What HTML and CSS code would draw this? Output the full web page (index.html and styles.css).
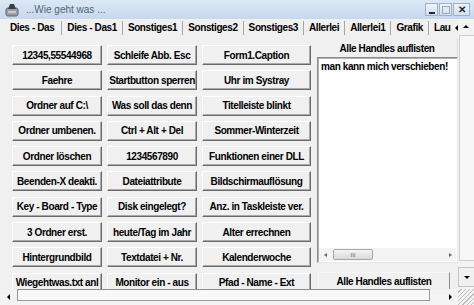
FILE: index.html
```html
<!DOCTYPE html>
<html lang="de">
  <head>
    <meta charset="UTF-8" />
    <title>...Wie geht was ...</title>
    <link rel="stylesheet" href="styles.css">
  </head>
  <body>
    <div class="window">
      <div class="titlebar">
        <svg class="app-icon" width="14" height="14" viewBox="0 0 14 14">
          <rect x="1" y="5" width="12" height="8" rx="2" fill="#9aa0a6" stroke="#5f6368" />
          <path d="M3 6 L5 1 L9 1 L11 6 Z" fill="#3c4043" />
          <rect x="3" y="8" width="8" height="2" fill="#c8ccd0" />
        </svg>
        <span class="title">...Wie geht was ...</span>
        <div class="caption-btns">
          <span class="cbtn"><i class="min"></i></span>
          <span class="cbtn"><i class="max"></i></span>
          <span class="cbtn close">&#x2715;</span>
        </div>
      </div>

      <div class="middle">
        <div class="viewport">
          <div class="tabs">
            <span class="tab active">Dies - Das</span>
            <span class="tab">Dies - Das1</span>
            <span class="tab">Sonstiges1</span>
            <span class="tab">Sonstiges2</span>
            <span class="tab">Sonstiges3</span>
            <span class="tab">Allerlei</span>
            <span class="tab">Allerlei1</span>
            <span class="tab">Grafik</span>
            <span class="tab last">Lau</span>
            <span class="tab-arrow"><i class="tri-left"></i></span>
          </div>

          <div class="page">
            <div class="grid">
              <button class="btn">12345,55544968</button>
              <button class="btn">Schleife Abb. Esc</button>
              <button class="btn">Form1.Caption</button>
              <button class="btn">Faehre</button>
              <button class="btn">Startbutton sperren</button>
              <button class="btn">Uhr im Systray</button>
              <button class="btn">Ordner auf C:\</button>
              <button class="btn">Was soll das denn</button>
              <button class="btn">Titelleiste blinkt</button>
              <button class="btn">Ordner umbenen.</button>
              <button class="btn">Ctrl + Alt + Del</button>
              <button class="btn">Sommer-Winterzeit</button>
              <button class="btn">Ordner löschen</button>
              <button class="btn">1234567890</button>
              <button class="btn">Funktionen einer DLL</button>
              <button class="btn">Beenden-X deakti.</button>
              <button class="btn">Dateiattribute</button>
              <button class="btn">Bildschirmauflösung</button>
              <button class="btn">Key - Board - Type</button>
              <button class="btn">Disk eingelegt?</button>
              <button class="btn">Anz. in Taskleiste ver.</button>
              <button class="btn">3 Ordner erst.</button>
              <button class="btn">heute/Tag im Jahr</button>
              <button class="btn">Alter errechnen</button>
              <button class="btn">Hintergrundbild</button>
              <button class="btn">Textdatei + Nr.</button>
              <button class="btn">Kalenderwoche</button>
              <button class="btn">Wiegehtwas.txt anl</button>
              <button class="btn">Monitor ein - aus</button>
              <button class="btn">Pfad - Name - Ext</button>
            </div>

            <div class="side">
              <div class="side-head">Alle Handles auflisten</div>
              <div class="memo">
                <div class="memo-text">man kann mich verschieben!</div>
                <div class="memo-scroll">
                  <span class="sarrow"><i class="tri-left small"></i></span>
                  <span class="memo-thumb">III</span>
                  <span class="memo-track"></span>
                  <span class="sarrow"><i class="tri-right small"></i></span>
                </div>
              </div>
              <button class="btn side-btn">Alle Handles auflisten</button>
            </div>
          </div>
        </div>

        <div class="vscroll">
          <span class="varrow"><i class="tri-up"></i></span>
          <span class="vthumb"></span>
          <span class="varrow down"><i class="tri-down"></i></span>
        </div>
      </div>

      <div class="hscroll">
        <span class="harrow"><i class="tri-left"></i></span>
        <span class="hthumb"></span>
        <span class="htrack"></span>
        <span class="harrow"><i class="tri-right"></i></span>
        <span class="grip"></span>
      </div>
    </div>
  </body>
</html>
```

FILE: styles.css
```css
body {
  margin: 0;
  background: #f0f0f0;
}

.window {
  width: 474px;
  height: 305px;
  overflow: hidden;
  display: flex;
  flex-direction: column;
  background: #f0f0f0;
  font: bold 10px "Liberation Sans", Arial, sans-serif;
  letter-spacing: -0.4px;
  color: #000;
}

/* title bar */
.titlebar {
  height: 19px;
  flex: none;
  display: flex;
  align-items: center;
  padding-left: 5px;
  background: linear-gradient(to bottom, #dce8f5, #c6d8ed);
}

.app-icon {
  flex: none;
}

.title {
  margin-left: 7px;
  font-weight: normal;
  font-size: 10px;
  letter-spacing: 0;
  color: #55626f;
}

.caption-btns {
  margin-left: auto;
  margin-right: 4px;
  display: flex;
  gap: 1px;
}

.cbtn {
  width: 13px;
  height: 13px;
  border: 1px solid #9fb1c9;
  background: linear-gradient(to bottom, #edf2f9, #d4e0ee);
  display: flex;
  align-items: center;
  justify-content: center;
  box-sizing: border-box;
}

.cbtn.close {
  width: 17px;
  font-size: 10px;
  font-weight: bold;
  color: #1e2733;
}

.cbtn .min {
  width: 6px;
  height: 2px;
  background: #1e2733;
  margin-top: 6px;
}

.cbtn .max {
  width: 6px;
  height: 6px;
  border: 1px solid #9aa9bc;
}

/* body */
.middle {
  height: 270px;
  display: flex;
  flex: none;
}

.viewport {
  width: 458px;
  overflow: hidden;
}

.tabs {
  height: 18px;
  display: flex;
  align-items: center;
  padding-left: 3px;
  white-space: nowrap;
}

.tab {
  flex: none;
  padding: 0 5px;
  height: 14px;
  line-height: 14px;
  border-right: 1px solid #a7a7a7;
}

.tab.active {
  padding: 0 7px;
}

.tab.last {
  border-right: none;
  padding-right: 1px;
}

.tab-arrow {
  margin-left: 3px;
  display: flex;
  align-items: center;
}

.page {
  display: flex;
  padding: 2px 0 0 12px;
}

.grid {
  margin-top: 6px;
  display: grid;
  grid-template-columns: 90px 90px 109px;
  grid-auto-rows: 20px;
  column-gap: 5px;
  row-gap: 5.3px;
}

.btn {
  box-sizing: border-box;
  margin: 0;
  padding: 0;
  height: 20px;
  display: flex;
  align-items: center;
  justify-content: center;
  white-space: nowrap;
  overflow: hidden;
  font: inherit;
  letter-spacing: inherit;
  color: #000;
  background: #f0f0f0;
  border: 1px solid;
  border-color: #ffffff #6b6b6b #6b6b6b #ffffff;
  box-shadow: inset -1px -1px #a9a9a9;
}

/* right side */
.side {
  margin-left: 6px;
  width: 141px;
  display: flex;
  flex-direction: column;
}

.side-head {
  height: 18px;
  display: flex;
  align-items: center;
  justify-content: center;
  border-right: 1px solid #dadada;
}

.memo {
  height: 206px;
  box-sizing: border-box;
  background: #fff;
  border: 1px solid;
  border-color: #8a8a8a #e8e8e8 #e8e8e8 #8a8a8a;
  box-shadow: inset 1px 1px #b5b5b5;
  display: flex;
  flex-direction: column;
}

.memo-text {
  flex: 1;
  padding: 3px 0 0 3px;
  white-space: nowrap;
  overflow: hidden;
}

.memo-scroll {
  height: 13px;
  margin: 0 1px 1px 1px;
  display: flex;
  align-items: center;
  background: #f3f3f3;
}

.sarrow {
  width: 12px;
  display: flex;
  justify-content: center;
}

.memo-thumb {
  margin-left: 2px;
  width: 40px;
  height: 11px;
  box-sizing: border-box;
  border: 1px solid #a8a8a8;
  border-radius: 2px;
  background: linear-gradient(to bottom, #f4f4f4, #d9d9d9);
  font-size: 6px;
  font-weight: normal;
  letter-spacing: 0;
  color: #666;
  display: flex;
  align-items: center;
  justify-content: center;
}

.memo-track {
  flex: 1;
}

.side-btn {
  margin: 9px 0 0 1px;
  width: 132px;
  height: 18px;
  border-color: #f7f7f7 #8d8d8d #f7f7f7 #f7f7f7;
  box-shadow: none;
}

/* scroll bars of the form */
.vscroll {
  width: 16px;
  display: flex;
  flex-direction: column;
  background: #f3f3f3;
}

.varrow {
  height: 15px;
  flex: none;
  display: flex;
  align-items: center;
  justify-content: center;
}

.varrow.down {
  height: 18px;
  border: 1px solid #c4c4c4;
  border-right: none;
  background: #f0f0f0;
  margin-bottom: 2px;
}

.vthumb {
  flex: 1;
  margin: 1px 0 6px 1px;
  border: 1px solid #cfcfcf;
  border-right: none;
  background: #f7f7f7;
}

.hscroll {
  height: 16px;
  flex: none;
  display: flex;
  align-items: stretch;
  background: #f3f3f3;
}

.harrow {
  width: 16px;
  flex: none;
  display: flex;
  align-items: center;
  justify-content: center;
}

.hthumb {
  width: 413px;
  margin: 0 0 4px 1px;
  box-sizing: border-box;
  border: 1px solid #9a9a9a;
  border-top-color: #8a8a8a;
  background: #f8f8f8;
}

.htrack {
  flex: 1;
}

.grip {
  width: 16px;
  background: repeating-linear-gradient(135deg, #f3f3f3 0 2px, #bdbdbd 2px 3px);
}

/* arrow glyphs */
.tri-left,
.tri-right,
.tri-up,
.tri-down {
  display: block;
  width: 0;
  height: 0;
}

.tri-left {
  border-top: 3px solid transparent;
  border-bottom: 3px solid transparent;
  border-right: 3px solid #000;
}

.tri-right {
  border-top: 3px solid transparent;
  border-bottom: 3px solid transparent;
  border-left: 3px solid #000;
}

.tri-up {
  border-left: 3px solid transparent;
  border-right: 3px solid transparent;
  border-bottom: 3px solid #000;
}

.tri-down {
  border-left: 3px solid transparent;
  border-right: 3px solid transparent;
  border-top: 3px solid #000;
}

.tri-left.small,
.tri-right.small {
  border-top-width: 2px;
  border-bottom-width: 2px;
  border-left-color: #666;
  border-right-color: #666;
}

.tri-left.small {
  border-left-color: transparent;
}

.tri-right.small {
  border-right-color: transparent;
}
```
